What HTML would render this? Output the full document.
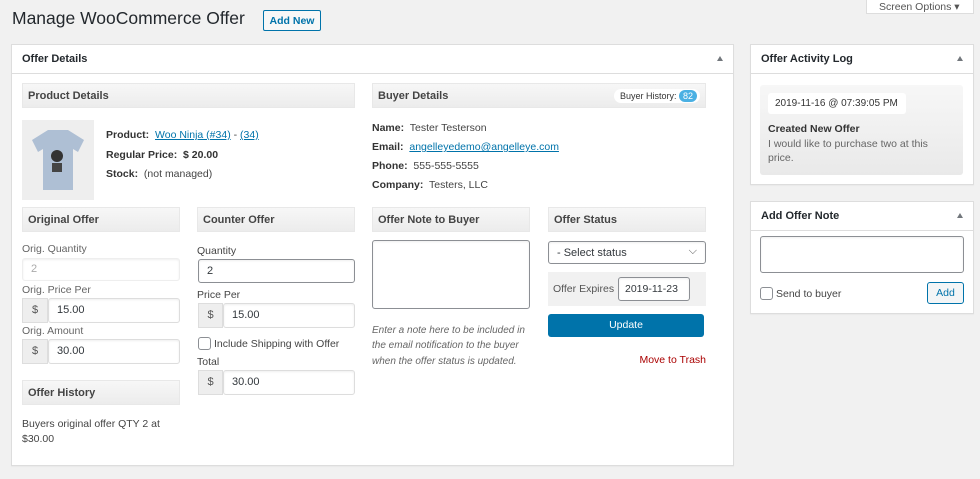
<!DOCTYPE html><html><head><style>
*{box-sizing:border-box;margin:0;padding:0}
body{width:980px;height:479px;background:#f1f1f1;font-family:"Liberation Sans",sans-serif;font-size:10.5px;color:#444;position:relative;overflow:hidden}
.a{position:absolute;white-space:nowrap}
.box{position:absolute;background:#fff;border:1px solid #ddd;box-shadow:0 1px 1px rgba(0,0,0,.04)}
.hd{position:absolute;left:0;right:0;top:0;height:29px;border-bottom:1px solid #ddd;font-weight:bold;color:#23282d;font-size:11px;padding:8px 10px}
.arr{position:absolute;right:10px;top:11px;width:0;height:0;border-left:3.5px solid transparent;border-right:3.5px solid transparent;border-bottom:5px solid #72777c}
.sh{position:absolute;height:25px;background:linear-gradient(#f7f7f7,#ececec);border:1px solid #e8e8e8;font-weight:bold;color:#444;font-size:11px;padding:6px 5px}
.inp{position:absolute;background:#fff;border:1px solid #ddd;border-radius:3px;padding:4px 8px;font-size:11px;color:#32373c;box-shadow:inset 0 1px 2px rgba(0,0,0,.07);white-space:nowrap}
.pre{position:absolute;background:#eee;border:1px solid #ddd;color:#555;text-align:center;padding-top:5px;font-size:11px}
b{color:#333}
a{color:#0073aa;text-decoration:underline}
.cb{position:absolute;width:13px;height:13px;border:1px solid #8c8f94;border-radius:3px;background:#fff}
</style></head><body>
<div class="a" style="left:12px;top:8px;font-size:17.5px;color:#23282d">Manage WooCommerce Offer</div>
<div class="a" style="left:263px;top:10px;width:58px;height:21px;border:1px solid #0073aa;border-radius:2px;color:#0073aa;font-weight:bold;font-size:10.5px;text-align:center;padding-top:4px;background:#f7f7f7">Add New</div>
<div class="a" style="left:866px;top:-6px;width:108px;height:20px;background:#fff;border:1px solid #ddd;color:#555;font-size:10.5px;padding:6px 0 0 12px">Screen Options ▾</div>

<div class="box" style="left:11px;top:44px;width:723px;height:422px">
<div class="hd">Offer Details<span class="arr"></span></div>
</div>
<div class="sh" style="left:22px;top:83px;width:333px">Product Details</div>
<div class="a" style="left:22px;top:120px;width:72px;height:80px;background:#eee"></div>
<svg class="a" style="left:28px;top:124px" width="60" height="72" viewBox="0 0 60 72"><path d="M20 6 L40 6 L56 16 L50 28 L45 25 L45 66 L15 66 L15 25 L10 28 L4 16Z" fill="#aebfd4"/><circle cx="29" cy="32" r="6" fill="#333"/><rect x="24" y="39" width="10" height="9" fill="#444"/></svg>
<div class="a" style="left:106px;top:126px;line-height:19.5px"><b>Product:</b>&nbsp; <a>Woo Ninja (#34)</a> - <a>(34)</a><br><b>Regular Price:&nbsp; $ 20.00</b><br><b>Stock:</b>&nbsp; (not managed)</div>

<div class="sh" style="left:372px;top:83px;width:334px">Buyer Details<span class="a" style="right:5px;top:5px;background:#fff;border-radius:9px;font-weight:normal;font-size:9px;padding:2px 3px 2px 6px;color:#333">Buyer History: <span style="background:#4ab0e3;color:#fff;border-radius:7px;padding:1px 4px">82</span></span></div>
<div class="a" style="left:372px;top:119px;line-height:19px"><b>Name:</b>&nbsp; Tester Testerson<br><b>Email:</b>&nbsp; <a>angelleyedemo@angelleye.com</a><br><b>Phone:</b>&nbsp; 555-555-5555<br><b>Company:</b>&nbsp; Testers, LLC</div>

<div class="sh" style="left:22px;top:207px;width:158px">Original Offer</div>
<div class="sh" style="left:197px;top:207px;width:158px">Counter Offer</div>
<div class="sh" style="left:372px;top:207px;width:158px">Offer Note to Buyer</div>
<div class="sh" style="left:548px;top:207px;width:158px">Offer Status</div>

<div class="a" style="left:22px;top:243px;color:#666">Orig. Quantity</div>
<div class="inp" style="left:22px;top:258px;width:158px;height:23px;color:#aaa;border-color:#eee">2</div>
<div class="a" style="left:22px;top:284px;color:#666">Orig. Price Per</div>
<div class="pre" style="left:22px;top:298px;width:26px;height:25px">$</div>
<div class="inp" style="left:48px;top:298px;width:132px;height:25px;padding-top:5px">15.00</div>
<div class="a" style="left:22px;top:325px;color:#666">Orig. Amount</div>
<div class="pre" style="left:22px;top:339px;width:26px;height:25px">$</div>
<div class="inp" style="left:48px;top:339px;width:132px;height:25px;padding-top:5px">30.00</div>
<div class="sh" style="left:22px;top:380px;width:158px">Offer History</div>
<div class="a" style="left:22px;top:417px;line-height:14.5px">Buyers original offer QTY 2 at<br>$30.00</div>

<div class="a" style="left:197px;top:245px">Quantity</div>
<div class="inp" style="left:198px;top:259px;width:157px;height:24px;border-color:#8c8f94;padding-top:5px">2</div>
<div class="a" style="left:197px;top:289px">Price Per</div>
<div class="pre" style="left:198px;top:303px;width:25px;height:25px">$</div>
<div class="inp" style="left:223px;top:303px;width:132px;height:25px;padding-top:5px">15.00</div>
<div class="cb" style="left:198px;top:337px"></div>
<div class="a" style="left:214px;top:338px">Include Shipping with Offer</div>
<div class="a" style="left:197px;top:356px">Total</div>
<div class="pre" style="left:198px;top:370px;width:25px;height:25px">$</div>
<div class="inp" style="left:223px;top:370px;width:132px;height:25px;padding-top:5px">30.00</div>

<div class="inp" style="left:372px;top:240px;width:158px;height:69px;border-color:#8c8f94"></div>
<div class="a" style="left:372px;top:323px;font-style:italic;color:#666;line-height:15.3px;font-size:10px">Enter a note here to be included in<br>the email notification to the buyer<br>when the offer status is updated.</div>

<div class="inp" style="left:548px;top:241px;width:158px;height:23px;border-color:#8c8f94;padding-top:5px">- Select status<span class="a" style="right:8px;top:3px;font-size:11px;color:#555">⌵</span></div>
<div class="a" style="left:548px;top:272px;width:158px;height:34px;background:#f1f1f1"></div>
<div class="a" style="left:553px;top:283px;color:#555">Offer Expires</div>
<div class="inp" style="left:618px;top:277px;width:72px;height:24px;border-color:#8c8f94;padding:5px 0 0 6px;font-size:10.5px">2019-11-23</div>
<div class="a" style="left:548px;top:314px;width:156px;height:23px;background:#0073aa;border-radius:3px;color:#fff;text-align:center;padding-top:5px">Update</div>
<div class="a" style="right:274px;top:354px;color:#a00">Move to Trash</div>

<div class="box" style="left:750px;top:44px;width:224px;height:141px"><div class="hd">Offer Activity Log<span class="arr"></span></div></div>
<div class="a" style="left:760px;top:85px;width:203px;height:90px;background:linear-gradient(#f7f7f7,#e9e9e9);border-radius:3px"></div>
<div class="a" style="left:768px;top:93px;width:138px;height:21px;background:#fff;border-radius:3px;padding:5px 0 0 7px;color:#333;font-size:10px">2019-11-16 @ 07:39:05 PM</div>
<div class="a" style="left:768px;top:122px;line-height:14.5px;color:#666;width:175px;white-space:normal"><b>Created New Offer</b><br>I would like to purchase two at this price.</div>

<div class="box" style="left:750px;top:201px;width:224px;height:113px"><div class="hd">Add Offer Note<span class="arr"></span></div></div>
<div class="inp" style="left:760px;top:236px;width:204px;height:37px;border-color:#8c8f94"></div>
<div class="cb" style="left:760px;top:287px"></div>
<div class="a" style="left:776px;top:288px">Send to buyer</div>
<div class="a" style="left:927px;top:282px;width:37px;height:22px;border:1px solid #0073aa;border-radius:3px;color:#0073aa;background:#f3f5f6;text-align:center;padding-top:4px">Add</div>
</body></html>
